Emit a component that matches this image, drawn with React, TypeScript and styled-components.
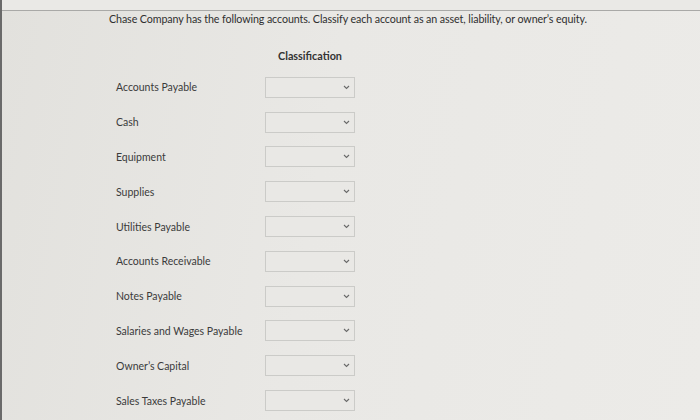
import React from "react";
import styled, { createGlobalStyle } from "styled-components";

const Global = createGlobalStyle`
  html, body { margin: 0; padding: 0; }
  body {
    width: 700px;
    height: 420px;
    overflow: hidden;
    background: #e6e5e1;
    font-family: Lato, "Noto Sans", sans-serif;
    color: #3a3a3a;
  }
`;

const Page = styled.div`
  width: 700px;
  height: 420px;
  display: flex;
  flex-direction: column;
  background: linear-gradient(100deg, #e2e1dd 0%, #e9e8e5 45%, #ecebe8 100%);
  border-left: 2px solid #6a6a6a;
  box-sizing: border-box;
`;

const TopStrip = styled.div`
  height: 10px;
  background: #eae9e6;
  border-bottom: 1px solid #a9a9a7;
  flex-shrink: 0;
`;

const Content = styled.div`
  padding: 1px 0 0 107px;
  display: flex;
  flex-direction: column;
`;

const Question = styled.p`
  margin: 0;
  font-size: 10.7px;
  line-height: 14px;
  color: #2f2f2f;
  letter-spacing: -0.1px;
`;

const Table = styled.div`
  display: grid;
  grid-template-columns: 156px 90px;
  grid-auto-rows: 34.8px;
  align-items: center;
`;

const HeaderGrid = styled.div`
  display: grid;
  grid-template-columns: 156px 90px;
  margin-top: 23px;
  margin-bottom: 7px;
`;

const HeaderCell = styled.div`
  grid-column: 2;
  font-size: 10.8px;
  font-weight: 700;
  color: #333;
  text-align: center;
  line-height: 14px;
`;

const Label = styled.div`
  font-size: 10.5px;
  color: #3b3b3b;
  padding-left: 7px;
`;

const SelectBox = styled.div`
  height: 21px;
  border: 1px solid #cbcbc8;
  background: #e9e8e5;
  box-sizing: border-box;
  display: flex;
  align-items: center;
  justify-content: flex-end;
  padding-right: 4px;
`;

const Spacer = styled.div``;

const Chevron = () => (
  <svg width="7" height="5" viewBox="0 0 7 5">
    <path d="M1 1 L3.5 3.5 L6 1" fill="none" stroke="#6a6a6a" strokeWidth="1.1" />
  </svg>
);

const accounts = [
  "Accounts Payable",
  "Cash",
  "Equipment",
  "Supplies",
  "Utilities Payable",
  "Accounts Receivable",
  "Notes Payable",
  "Salaries and Wages Payable",
  "Owner\u2019s Capital",
  "Sales Taxes Payable",
];

export default function App() {
  return (
    <>
      <Global />
      <Page>
        <TopStrip />
        <Content>
          <Question>
            Chase Company has the following accounts. Classify each account as an asset, liability, or owner’s equity.
          </Question>
          <HeaderGrid>
            <Spacer />
            <HeaderCell>Classification</HeaderCell>
          </HeaderGrid>
          <Table>
            {accounts.map((a) => (
              <React.Fragment key={a}>
                <Label>{a}</Label>
                <SelectBox>
                  <Chevron />
                </SelectBox>
              </React.Fragment>
            ))}
          </Table>
        </Content>
      </Page>
    </>
  );
}
